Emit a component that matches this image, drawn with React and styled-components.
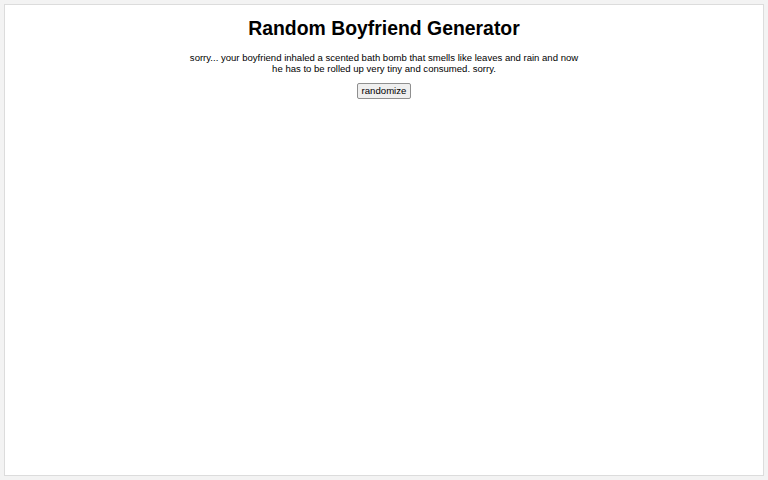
import React, { useState } from "react";
import styled, { createGlobalStyle } from "styled-components";

const Global = createGlobalStyle`
  html, body { margin: 0; padding: 0; }
  body {
    background: #f3f3f3;
    font-family: "Liberation Sans", Arial, sans-serif;
    color: #000;
  }
`;

const Page = styled.div`
  padding: 4px;
  height: 480px;
  box-sizing: border-box;
`;

const Panel = styled.main`
  box-sizing: border-box;
  height: 472px;
  width: 760px;
  background: #fff;
  border: 1px solid #dcdcdc;
  display: flex;
  flex-direction: column;
  align-items: center;
  padding-top: 14px;
`;

const Title = styled.h1`
  margin: 0;
  font-size: 19.4px;
  font-weight: bold;
  line-height: 18px;
`;

const Message = styled.p`
  margin: 15px 0 0;
  max-width: 400px;
  text-align: center;
  font-size: 9.55px;
  line-height: 11px;
`;

const Button = styled.button`
  margin-top: 9px;
  font-family: "Liberation Sans", Arial, sans-serif;
  font-size: 9.6px;
  line-height: 11px;
  padding: 1px 4px 2px;
  background: #efefef;
  border: 1px solid #8f8f8f;
  border-radius: 2px;
  color: #000;
`;

const messages = [
  "sorry... your boyfriend inhaled a scented bath bomb that smells like leaves and rain and now he has to be rolled up very tiny and consumed. sorry.",
];

export default function App() {
  const [i, setI] = useState(0);
  return (
    <>
      <Global />
      <Page>
        <Panel>
          <Title>Random Boyfriend Generator</Title>
          <Message>{messages[i]}</Message>
          <Button onClick={() => setI((i + 1) % messages.length)}>randomize</Button>
        </Panel>
      </Page>
    </>
  );
}
